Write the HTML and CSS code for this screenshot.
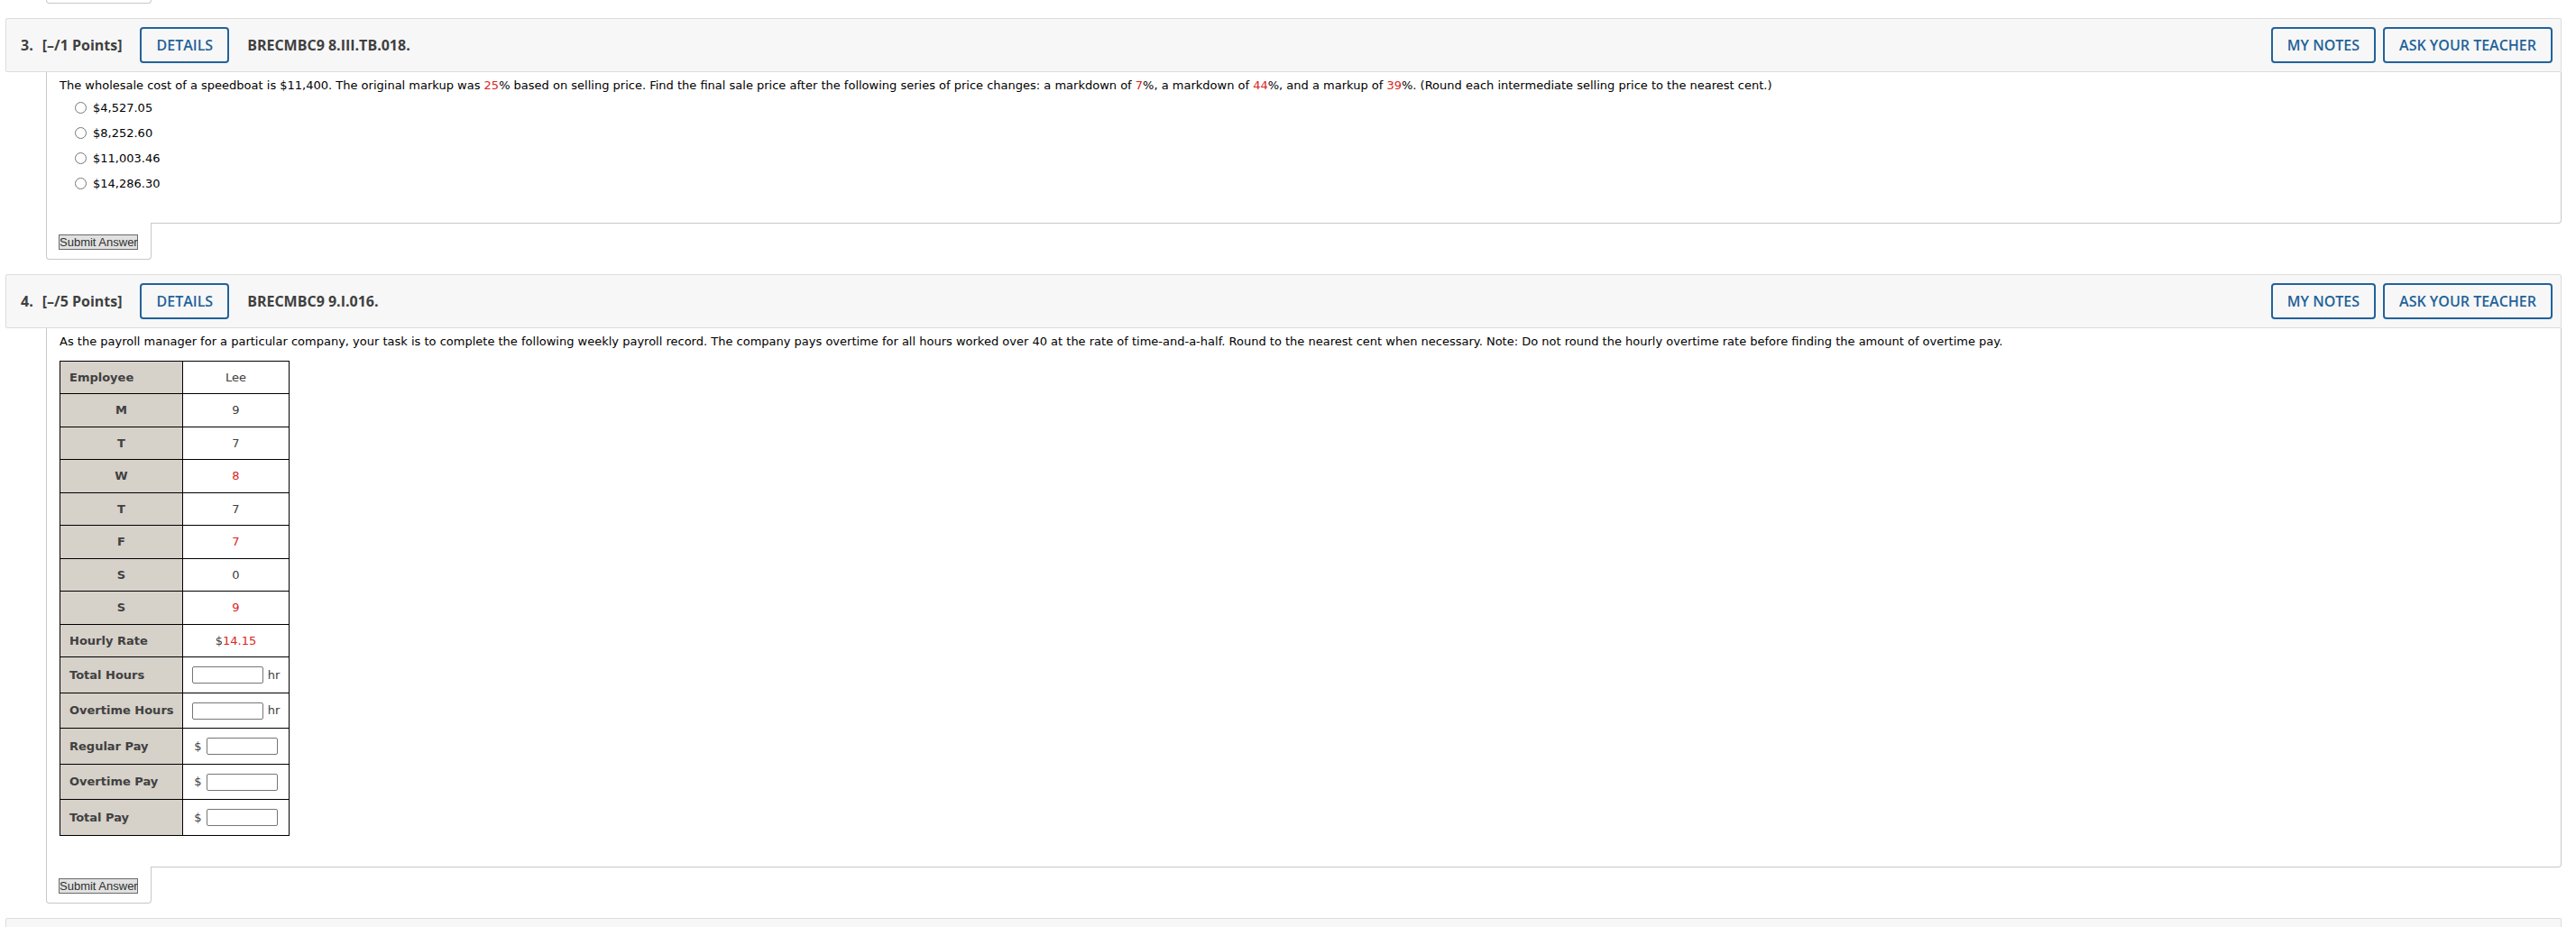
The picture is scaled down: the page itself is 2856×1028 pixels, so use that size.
FILE: index.html
```html
<!DOCTYPE html>
<html lang="en">
  <head>
    <meta charset="UTF-8" />
    <meta name="viewport" content="width=device-width, initial-scale=1.0" />
    <title>Assignment</title>
    <link rel="stylesheet" href="styles.css">
  </head>
  <body>
    <main>
      <!-- end of question 2 -->
      <div class="tab tab-end"></div>

      <section class="question">
        <header class="question-header">
          <span class="number">3.</span>
          <span class="points">[–/1 Points]</span>
          <button type="button" class="btn">DETAILS</button>
          <h2 class="code">BRECMBC9 8.III.TB.018.</h2>
          <div class="actions">
            <button type="button" class="btn">MY NOTES</button>
            <button type="button" class="btn">ASK YOUR TEACHER</button>
          </div>
        </header>
        <div class="question-body">
          <p class="prompt">The wholesale cost of a speedboat is $11,400. The original markup was <span class="red">25</span>% based on selling price. Find the final sale price after the following series of price changes: a markdown of <span class="red">7</span>%, a markdown of <span class="red">44</span>%, and a markup of <span class="red">39</span>%. (Round each intermediate selling price to the nearest cent.)</p>
          <div class="choices">
            <label class="choice"><input type="radio" name="q3">$4,527.05</label>
            <label class="choice"><input type="radio" name="q3">$8,252.60</label>
            <label class="choice"><input type="radio" name="q3">$11,003.46</label>
            <label class="choice"><input type="radio" name="q3">$14,286.30</label>
          </div>
        </div>
        <div class="tab">
          <button type="submit" class="submit">Submit Answer</button>
        </div>
      </section>

      <section class="question">
        <header class="question-header">
          <span class="number">4.</span>
          <span class="points">[–/5 Points]</span>
          <button type="button" class="btn">DETAILS</button>
          <h2 class="code">BRECMBC9 9.I.016.</h2>
          <div class="actions">
            <button type="button" class="btn">MY NOTES</button>
            <button type="button" class="btn">ASK YOUR TEACHER</button>
          </div>
        </header>
        <div class="question-body">
          <p class="prompt">As the payroll manager for a particular company, your task is to complete the following weekly payroll record. The company pays overtime for all hours worked over 40 at the rate of time-and-a-half. Round to the nearest cent when necessary. Note: Do not round the hourly overtime rate before finding the amount of overtime pay.</p>
          <table class="payroll">
            <tr><th class="left" scope="row">Employee</th><td>Lee</td></tr>
            <tr><th scope="row">M</th><td>9</td></tr>
            <tr><th scope="row">T</th><td>7</td></tr>
            <tr><th scope="row">W</th><td class="red">8</td></tr>
            <tr><th scope="row">T</th><td>7</td></tr>
            <tr><th scope="row">F</th><td class="red">7</td></tr>
            <tr><th scope="row">S</th><td>0</td></tr>
            <tr><th scope="row">S</th><td class="red">9</td></tr>
            <tr><th class="left" scope="row">Hourly Rate</th><td>$<span class="red">14.15</span></td></tr>
            <tr class="entry"><th class="left" scope="row"><label for="total-hours">Total Hours</label></th><td><div class="field"><input type="text" id="total-hours">hr</div></td></tr>
            <tr class="entry"><th class="left" scope="row"><label for="overtime-hours">Overtime Hours</label></th><td><div class="field"><input type="text" id="overtime-hours">hr</div></td></tr>
            <tr class="entry"><th class="left" scope="row"><label for="regular-pay">Regular Pay</label></th><td><div class="field">$<input type="text" id="regular-pay"></div></td></tr>
            <tr class="entry"><th class="left" scope="row"><label for="overtime-pay">Overtime Pay</label></th><td><div class="field">$<input type="text" id="overtime-pay"></div></td></tr>
            <tr class="entry"><th class="left" scope="row"><label for="total-pay">Total Pay</label></th><td><div class="field">$<input type="text" id="total-pay"></div></td></tr>
          </table>
        </div>
        <div class="tab">
          <button type="submit" class="submit">Submit Answer</button>
        </div>
      </section>

      <section class="question">
        <header class="question-header"></header>
      </section>
    </main>
  </body>
</html>
```

FILE: styles.css
```css
* {
  box-sizing: border-box;
}
html {
  overflow: hidden;
}
body {
  margin: 0;
  background-color: #fff;
  color: #000;
  font-family: Verdana, "DejaVu Sans", sans-serif;
  font-size: 13px;
  line-height: 16px;
}
main {
  padding: 0 16px 0 6px;
}
.question {
  margin-top: 16px;
}
.question-header {
  display: flex;
  align-items: center;
  height: 60px;
  padding: 0 9px 0 16px;
  background-color: #f7f7f7;
  border: 1px solid #dcdcdc;
  border-radius: 2px;
  color: #404040;
  font-family: "Open Sans", sans-serif;
  font-size: 16px;
  font-weight: bold;
}
.points {
  margin-left: 10px;
}
.btn {
  height: 40px;
  padding: 0 16px;
  background-color: transparent;
  border: 2px solid #22629a;
  border-radius: 4px;
  color: #22629a;
  font-family: "Open Sans", sans-serif;
  font-size: 16px;
  font-weight: 600;
}
.points + .btn {
  margin-left: 20px;
}
.code {
  margin: 0 0 0 20px;
  font-size: 16px;
}
.actions {
  display: flex;
  gap: 8px;
  margin-left: auto;
}
.question-body {
  margin-left: 45px;
  padding: 7px 14px 29px;
  border: 1px solid #c8c8c8;
  border-top: none;
  border-radius: 0 0 4px 0;
}
.prompt {
  margin: 0;
}
.red {
  color: #d9261c;
}
.choices {
  display: flex;
  flex-direction: column;
  align-items: flex-start;
  padding: 3px 0 0 17px;
}
.choice {
  display: flex;
  align-items: center;
  gap: 7px;
  height: 28px;
}
.choice input {
  width: 13px;
  height: 13px;
  margin: 0 0 2px;
}

/* covers the bottom border of the question body */
.tab {
  position: relative;
  width: 117px;
  height: 41px;
  margin: -1px 0 0 45px;
  padding: 13px;
  background-color: #fff;
  border: 1px solid #c8c8c8;
  border-top: none;
  border-radius: 0 0 4px 4px;
}
.tab-end {
  height: 5px;
  padding: 0;
}
.submit {
  display: block;
  padding: 0;
  width: 88px;
  height: 17px;
  background-color: #e1e1e1;
  border: 1px solid #6b6b6b;
  color: #303030;
  font-family: "Liberation Sans", Arial, sans-serif;
  font-size: 13px;
  line-height: 15px;
  white-space: nowrap;
}

.payroll {
  margin: 13px 0 5px;
  border-collapse: collapse;
  color: #404040;
}
.payroll th,
.payroll td {
  padding: 0 10px;
  border: 1px solid #000;
  text-align: center;
}
.payroll th {
  width: 136px;
  background-color: #d6d1c9;
}
.payroll td {
  width: 118px;
  padding: 0 8px;
}
.payroll .left {
  padding-right: 4px;
  text-align: left;
  white-space: nowrap;
}
.payroll .red {
  color: #d9261c;
}
.payroll tr {
  height: 36px;
}
.payroll tr:nth-child(even) {
  height: 37px;
}
.payroll .entry {
  height: 39px;
}
.payroll .entry:nth-child(even) {
  height: 40px;
}
.field {
  display: flex;
  align-items: center;
  justify-content: center;
  gap: 5px;
}
.field input {
  width: 79px;
  height: 19px;
  padding: 0 2px;
  border: 1px solid #767676;
  border-radius: 2px;
}
```
